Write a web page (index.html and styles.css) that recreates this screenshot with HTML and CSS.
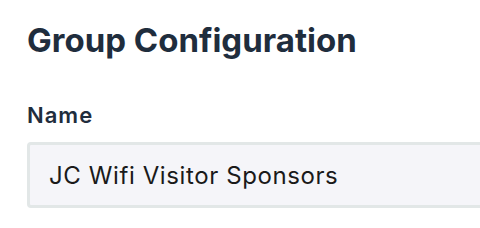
FILE: index.html
```html
<!DOCTYPE html>
<html>
<head>
<meta charset="utf-8">
<link rel="stylesheet" href="styles.css">
</head>
<body>
<div class="page">
  <h1 class="title">Group Configuration</h1>
  <div class="field">
    <label class="label" for="name">Name</label>
    <input class="input" id="name" type="text" value="JC Wifi Visitor Sponsors">
  </div>
</div>
</body>
</html>
```
FILE: styles.css
```css
html, body {
  margin: 0;
  padding: 0;
  background: #ffffff;
}
body {
  font-family: Inter, "Noto Sans", sans-serif;
  overflow: hidden;
}
.page {
  box-sizing: border-box;
  width: 480px;
  height: 228px;
  overflow: hidden;
  padding: 20px 0 0 27px;
}
.title {
  margin: 0;
  font-size: 33px;
  line-height: 40px;
  font-weight: 700;
  color: #1f2d3d;
  letter-spacing: 0;
  white-space: nowrap;
}
.field {
  margin-top: 42px;
  display: flex;
  flex-direction: column;
  width: 520px;
}
.label {
  font-size: 22px;
  font-weight: 600;
  color: #1f2d3d;
  line-height: 26px;
  letter-spacing: 1px;
}
.input {
  margin-top: 14px;
  box-sizing: border-box;
  height: 66px;
  width: 520px;
  border: 3px solid #e2e7e7;
  border-radius: 4px;
  background: #f5f5f9;
  padding: 0 19px;
  font-family: Inter, "Noto Sans", sans-serif;
  font-size: 24px;
  letter-spacing: 0.6px;
  color: #1a1a1a;
  outline: none;
}
```
